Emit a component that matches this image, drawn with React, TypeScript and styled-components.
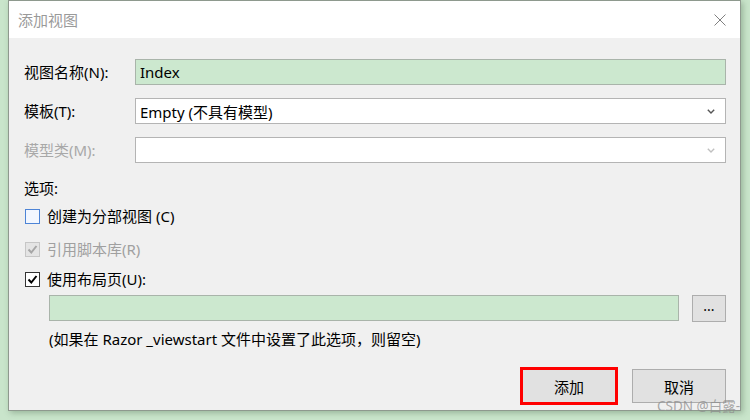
import React from "react";
import styled, { createGlobalStyle } from "styled-components";

const GlobalStyle = createGlobalStyle`
  html, body {
    margin: 0;
    padding: 0;
    background: #c9e5cb;
  }
  body {
    font-family: "Segoe UI", "Noto Sans", "Noto Sans CJK SC", sans-serif;
    font-size: 15px;
    color: #000;
  }
`;

const Screen = styled.div`
  position: relative;
  width: 750px;
  height: 420px;
  padding-left: 8px;
  box-sizing: border-box;
  overflow: hidden;
`;

const Dialog = styled.div`
  width: 733px;
  height: 411px;
  box-sizing: border-box;
  border: 1px solid #8e998e;
  background: #f0f0f0;
  display: flex;
  flex-direction: column;
  box-shadow: 2px 2px 6px rgba(60, 90, 60, 0.35);
`;

const TitleBar = styled.div`
  height: 37px;
  flex: none;
  background: #fff;
  display: flex;
  align-items: center;
  justify-content: space-between;
  padding: 0 14px 0 9px;
`;

const Title = styled.span`
  font-family: "Noto Sans CJK SC", sans-serif;
  font-size: 15px;
  color: #9a9a9a;
`;

const CloseIcon = styled.svg`
  width: 12px;
  height: 12px;
  display: block;
`;

const Body = styled.div`
  padding: 21px 14px 0 15px;
  display: flex;
  flex-direction: column;
`;

const FieldRow = styled.div<{ $top?: number }>`
  display: grid;
  grid-template-columns: 111px 1fr;
  align-items: center;
  height: 26px;
  margin-top: ${(p) => p.$top ?? 0}px;
`;

const Label = styled.span<{ $disabled?: boolean }>`
  font-size: 15px;
  line-height: 20px;
  color: ${(p) => (p.$disabled ? "#a8a8a8" : "#000")};
  white-space: nowrap;
`;

const TextBox = styled.div<{ $tone: "green" | "white" }>`
  height: 26px;
  box-sizing: border-box;
  border: 1px solid ${(p) => (p.$tone === "green" ? "#a9b4aa" : "#b4b4b4")};
  background: ${(p) => (p.$tone === "green" ? "#cce8cf" : "#ffffff")};
  display: flex;
  align-items: center;
  padding: 0 10px 0 4px;
  font-size: 15px;
  white-space: nowrap;
`;

const SelectText = styled.span`
  flex: 1;
`;

const Chevron = styled.svg`
  width: 8px;
  height: 5px;
  display: block;
  margin-right: 0px;
`;

const OptionsTitle = styled.div`
  margin-top: 15px;
  line-height: 20px;
  height: 20px;
`;

const CheckRow = styled.label<{ $top: number; $disabled?: boolean }>`
  display: flex;
  align-items: center;
  gap: 7px;
  height: 20px;
  margin-top: ${(p) => p.$top}px;
  padding-left: 1px;
  color: ${(p) => (p.$disabled ? "#a0a0a0" : "#000")};
  line-height: 20px;
`;

const Box = styled.span<{ $state: "focus" | "checked" | "disabled" }>`
  width: 15px;
  height: 15px;
  box-sizing: border-box;
  flex: none;
  display: flex;
  align-items: center;
  justify-content: center;
  border: 1px solid
    ${(p) =>
      p.$state === "focus" ? "#4d84d6" : p.$state === "disabled" ? "#c6c6c6" : "#333333"};
  background: ${(p) =>
    p.$state === "focus" ? "#f2f7ff" : p.$state === "disabled" ? "#e4e4e4" : "#ffffff"};
`;

const Tick = styled.svg`
  width: 11px;
  height: 11px;
  display: block;
`;

const PathRow = styled.div`
  display: flex;
  gap: 13px;
  margin: 6px 0 0 25px;
  height: 27px;
`;

const PathBox = styled.div`
  flex: 1;
  height: 26px;
  box-sizing: border-box;
  border: 1px solid #a9b4aa;
  background: #cce8cf;
`;

const BrowseButton = styled.button`
  width: 34px;
  height: 27px;
  box-sizing: border-box;
  border: 1px solid #adadad;
  background: #e1e1e1;
  font-family: inherit;
  font-size: 14px;
  line-height: 1;
  padding: 0 0 6px;
  color: #000;
`;

const Note = styled.div`
  margin: 7px 0 0 25px;
  line-height: 20px;
  white-space: nowrap;
`;

const Actions = styled.div`
  display: flex;
  justify-content: flex-end;
  gap: 16px;
  margin-top: 20px;
`;

const ActionButton = styled.button<{ $marked?: boolean }>`
  width: 94px;
  height: 34px;
  box-sizing: border-box;
  border: 1px solid #adadad;
  background: #e1e1e1;
  font-family: "Noto Sans CJK SC", sans-serif;
  font-size: 15px;
  color: #000;
  padding: 0;
  outline: ${(p) => (p.$marked ? "3px solid #ff0000" : "none")};
  outline-offset: -1px;
`;

const Watermark = styled.span`
  position: absolute;
  left: 657px;
  top: 395px;
  font-family: "Noto Sans", "Noto Sans CJK SC", sans-serif;
  font-size: 13.5px;
  color: rgba(140, 140, 140, 0.75);
  white-space: nowrap;
  pointer-events: none;
`;

const TickMark = ({ color }: { color: string }) => (
  <Tick viewBox="0 0 11 11">
    <path d="M1.5 5.5 L4.3 8.5 L9.5 2" fill="none" stroke={color} strokeWidth="2" />
  </Tick>
);

const DropArrow = ({ color }: { color: string }) => (
  <Chevron viewBox="0 0 8 5">
    <path d="M0.8 0.8 L4 4 L7.2 0.8" fill="none" stroke={color} strokeWidth="1.4" />
  </Chevron>
);

export default function App() {
  return (
    <>
      <GlobalStyle />
      <Screen>
        <Dialog>
          <TitleBar>
            <Title>添加视图</Title>
            <CloseIcon viewBox="0 0 12 12">
              <path d="M0.5 0.5 L11.5 11.5 M11.5 0.5 L0.5 11.5" stroke="#808080" strokeWidth="1" />
            </CloseIcon>
          </TitleBar>
          <Body>
            <FieldRow>
              <Label>视图名称(N):</Label>
              <TextBox $tone="green">Index</TextBox>
            </FieldRow>
            <FieldRow $top={13}>
              <Label>模板(T):</Label>
              <TextBox $tone="white">
                <SelectText>Empty (不具有模型)</SelectText>
                <DropArrow color="#555" />
              </TextBox>
            </FieldRow>
            <FieldRow $top={13}>
              <Label $disabled>模型类(M):</Label>
              <TextBox $tone="white">
                <SelectText />
                <DropArrow color="#c0c0c0" />
              </TextBox>
            </FieldRow>

            <OptionsTitle>选项:</OptionsTitle>
            <CheckRow $top={8}>
              <Box $state="focus" />
              创建为分部视图 (C)
            </CheckRow>
            <CheckRow $top={13} $disabled>
              <Box $state="disabled">
                <TickMark color="#a6a6a6" />
              </Box>
              引用脚本库(R)
            </CheckRow>
            <CheckRow $top={10}>
              <Box $state="checked">
                <TickMark color="#000" />
              </Box>
              使用布局页(U):
            </CheckRow>

            <PathRow>
              <PathBox />
              <BrowseButton>...</BrowseButton>
            </PathRow>
            <Note>(如果在 Razor _viewstart 文件中设置了此选项，则留空)</Note>

            <Actions>
              <ActionButton $marked>添加</ActionButton>
              <ActionButton>取消</ActionButton>
            </Actions>
          </Body>
        </Dialog>
        <Watermark>CSDN @白露-</Watermark>
      </Screen>
    </>
  );
}
